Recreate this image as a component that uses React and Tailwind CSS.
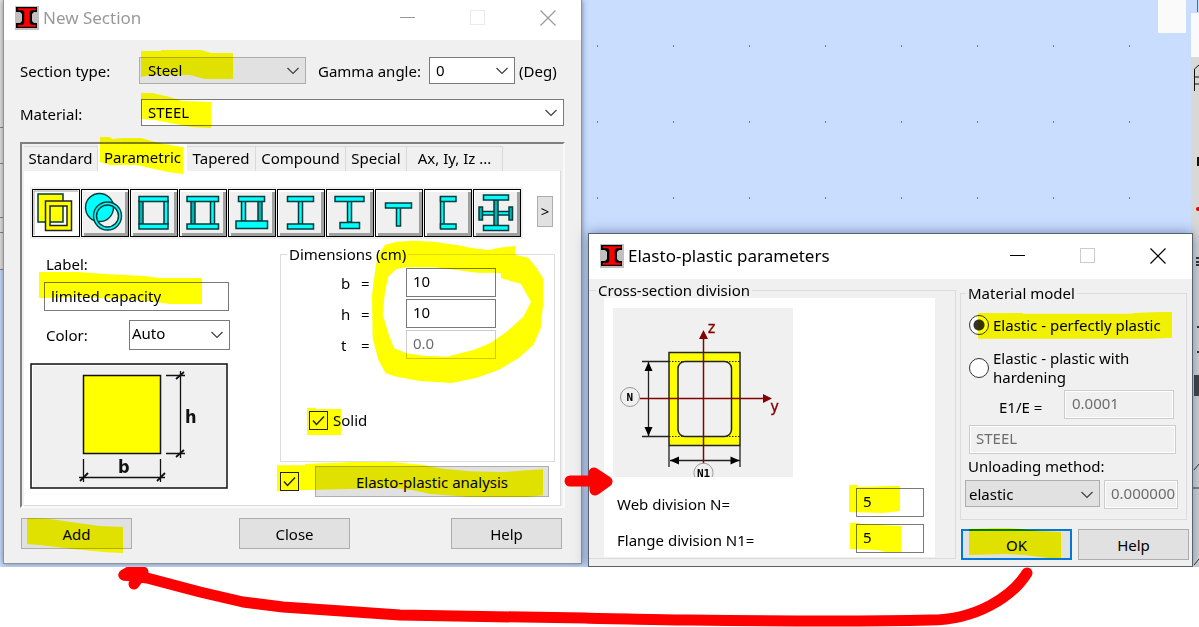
import React from 'react';

function Mark({ className, viewBox, points }) {
  return (
    <svg
      aria-hidden="true"
      viewBox={viewBox}
      preserveAspectRatio="none"
      className={`pointer-events-none absolute max-w-none mix-blend-multiply ${className}`}
    >
      <path fill="#ffff00" fillRule="evenodd" d={points} />
    </svg>
  );
}

function AppIcon() {
  return (
    <svg viewBox="0 0 24 24" className="size-6 shrink-0" aria-hidden="true">
      <rect width="24" height="24" fill="#c0c0c0" />
      <path d="M1 1H22V6H19L17 8V15L19 17H22V22H1V17H5L7 15V8L5 6H1Z" fill="#000" />
      <path d="M3 2.500H20.500V4H16L14.500 6V17L16 19H20.500V20.500H3V19H8L9.500 17V6L8 4H3Z" fill="#ff0000" stroke="#ff0000" strokeWidth="0.500" />
    </svg>
  );
}

function TitleBar({ title, active, className }) {
  const line = active ? '#000000' : '#999999';
  return (
    <header className={`flex items-center bg-white ${className}`}>
      <AppIcon />
      <h1 className={`ml-1 flex-1 text-[17px] leading-6 ${active ? 'text-black' : 'text-[#999999]'}`}>{title}</h1>
      <div className="flex items-center gap-[54px]">
        <button type="button" aria-label="Minimize" className="size-4">
          <svg viewBox="0 0 16 16" className="size-4"><path d="M0 7.500h15" stroke={line} /></svg>
        </button>
        <button type="button" aria-label="Maximize" disabled className="size-4">
          <svg viewBox="0 0 16 16" className="size-4">
            <rect x="0.500" y="0.500" width="14" height="14" fill="none" stroke={active ? '#cccccc' : '#ebebeb'} />
          </svg>
        </button>
        <button type="button" aria-label="Close window" className="size-4">
          <svg viewBox="0 0 16 16" className="size-4"><path d="M0.500 0.500l15 15M15.500 0.500l-15 15" stroke={line} strokeWidth="1.200" /></svg>
        </button>
      </div>
    </header>
  );
}

function Select({ id, label, value, className, selectClass, children }) {
  return (
    <div className={`relative ${className}`}>
      <select
        id={id}
        aria-label={label}
        defaultValue={value}
        className={`block w-full appearance-none border leading-5 text-black outline-none ${selectClass}`}
      >
        <option>{value}</option>
      </select>
      <svg viewBox="0 0 12 8" className="pointer-events-none absolute top-1/2 right-[7px] h-2 w-3 -translate-y-1/2" aria-hidden="true">
        <path d="M0.500 1l5.500 5.500L11.500 1" fill="none" stroke="#404040" strokeWidth="1.200" />
      </svg>
      {children}
    </div>
  );
}

function Button({ children, className = '' }) {
  return (
    <button type="button" className={`h-[31px] border border-[#adadad] bg-[#e1e1e1] leading-5 text-black ${className}`}>
      {children}
    </button>
  );
}

function Check({ id, label }) {
  return (
    <span className="relative block size-[19px] shrink-0">
      <input id={id} aria-label={label} type="checkbox" defaultChecked className="block size-[19px] appearance-none border border-[#222222] bg-white" />
      <svg viewBox="0 0 19 19" className="pointer-events-none absolute inset-0 size-[19px]" aria-hidden="true">
        <path d="M4 9.500l3.500 4L15 5.500" fill="none" stroke="#222" strokeWidth="1.400" />
      </svg>
    </span>
  );
}

const CYAN = '#00ffff';
const TEAL = '#00b4b4';

const sectionShapes = [
  {
    name: 'Rectangle',
    boxes: [[6, 5, 25, 28, '#ffff00']],
    extra: (
      <path d="M13.500 12h26v29.500h-26zM18 17v19.500h17V17z" fill="#ffff00" stroke="#222" strokeWidth="1.500" fillRule="evenodd" />
    ),
  },
  {
    name: 'Circle',
    boxes: [],
    extra: (
      <g stroke="#053b3b" strokeWidth="1.400">
        <circle cx="18.500" cy="18.500" r="14" fill={CYAN} />
        <circle cx="26.500" cy="27" r="12.500" fill="none" stroke={CYAN} strokeWidth="3" />
        <circle cx="26.500" cy="27" r="14" fill="none" />
        <circle cx="26.500" cy="27" r="11" fill="none" />
      </g>
    ),
  },
  { name: 'Box', boxes: [[9, 12, 4, 23, TEAL], [34, 12, 4, 23, CYAN], [9, 7.5, 29, 5, CYAN], [9, 35, 29, 5, CYAN]] },
  { name: 'Wide box', boxes: [[12, 12, 4, 23, TEAL], [31.5, 12, 4, 23, CYAN], [8, 7.5, 31.5, 5, CYAN], [8, 35, 31.5, 5, CYAN]] },
  { name: 'Asymmetric box', boxes: [[13.5, 12, 4, 20, CYAN], [30, 12, 4, 20, TEAL], [10.5, 7.5, 26, 5, CYAN], [8, 32, 31.5, 7.5, CYAN]] },
  { name: 'I section', boxes: [[21.5, 12, 4, 23, CYAN], [10.5, 7.5, 26, 5, CYAN], [10.5, 35, 26, 5, CYAN]] },
  { name: 'Asymmetric I section', boxes: [[21.5, 12, 4, 21, CYAN], [9, 7.5, 29, 5, CYAN], [14, 33.5, 19.5, 6, CYAN]] },
  { name: 'T section', boxes: [[21.5, 18, 4, 19, CYAN], [10.5, 14, 26, 5, CYAN]] },
  { name: 'Channel', boxes: [[16.5, 8, 3.5, 31, CYAN], [16.5, 7.5, 15.5, 5, CYAN], [16.5, 35, 15.5, 5, CYAN]] },
  {
    name: 'Cross section',
    boxes: [[9, 22.5, 28, 3.5, CYAN], [21, 11, 4, 26, TEAL], [10.5, 6, 25, 5, CYAN], [10.5, 36.5, 25, 5, CYAN], [6, 18, 3.5, 13, TEAL], [36, 18, 3.5, 13, TEAL]],
  },
];

function ShapeButton({ shape, selected }) {
  return (
    <button
      type="button"
      aria-label={shape.name}
      aria-pressed={selected}
      className={`h-12 w-12 shrink-0 border border-black ${selected ? 'bg-white' : 'bg-[#f0f0f0]'}`}
    >
      <svg viewBox="1 1 46 46" className="block h-[46px] w-[46px]" aria-hidden="true">
        {selected ? (
          <path d="M2 46V2H46" fill="none" stroke="#a0a0a0" />
        ) : (
          <>
            <path d="M1 46V2H46" fill="none" stroke="#fff" strokeWidth="2" />
            <path d="M3 45.500H45.500V3" fill="none" stroke="#a0a0a0" strokeWidth="3" />
          </>
        )}
        {shape.boxes.map(([x, y, w, h, fill]) => (
          <rect key={`${x}-${y}-${w}`} x={x} y={y} width={w} height={h} fill={fill} stroke="#053b3b" strokeWidth="1.500" />
        ))}
        {shape.extra}
      </svg>
    </button>
  );
}

const tabs = [
  { name: 'Standard', width: 'w-[74px]' },
  { name: 'Parametric', width: 'w-[89px]' },
  { name: 'Tapered', width: 'w-[69px]' },
  { name: 'Compound', width: 'w-[90px]' },
  { name: 'Special', width: 'w-[61px]' },
  { name: 'Ax, Iy, Iz ...', width: 'w-[96px]' },
];

function Tabs() {
  return (
    <div role="tablist" className="flex h-[27px] items-end pl-[2px]">
      {tabs.map((tab) => {
        const on = tab.name === 'Parametric';
        return (
          <button
            key={tab.name}
            role="tab"
            type="button"
            aria-selected={on}
            className={`relative shrink-0 leading-5 whitespace-nowrap ${tab.width} ${
              on ? 'h-[27px] bg-white pb-[2px]' : 'h-[25px] border-t border-r border-[#d9d9d9] pb-[2px]'
            }`}
          >
            {tab.name}
            {on && (
              <Mark
                className="-top-[7px] left-[2px] z-10 h-[37px] w-[83px]"
                viewBox="100 137 83 37"
                points="M100 137H110L112 139L123 138H141L155 142L170 145L183 147V174L168 172L150 168L137 165H110L100 162Z"
              />
            )}
          </button>
        );
      })}
    </div>
  );
}

function RectanglePreview() {
  return (
    <svg viewBox="0 0 198 126" className="block h-[126px] w-[198px]" role="img" aria-label="Rectangle with width b and height h">
      <rect x="1" y="1" width="196" height="124" fill="#f0f0f0" stroke="#111" strokeWidth="1.500" />
      <path d="M2.500 124V2.500H196" fill="none" stroke="#fff" />
      <rect x="53.500" y="12.500" width="77" height="78" fill="#ffff00" stroke="#111" strokeWidth="1.500" />
      <g stroke="#111" strokeWidth="1.300" fill="none">
        <path d="M136 12.500h19M136 90.500h19M150.500 8v87M53.500 96v23M130.500 96v23M49 114.500h86" />
        <path d="M146 16l8-7M146 94l8-7M50 118l8-8M127 118l8-8" strokeWidth="1.800" />
      </g>
      <g fontFamily="'DejaVu Sans Condensed', 'Noto Sans', sans-serif" fontWeight="700" fontSize="18" fill="#111">
        <text x="155" y="60">h</text>
        <text x="88" y="110">b</text>
      </g>
    </svg>
  );
}

function DimensionRow({ id, name, value, disabled }) {
  return (
    <div className="flex h-[29px] items-center">
      <label htmlFor={id} className="flex w-[125px] shrink-0 pl-[60px] leading-5">
        <span className="w-5">{name}</span>
        <span>=</span>
      </label>
      <input
        id={id}
        defaultValue={value}
        disabled={disabled}
        className={`h-[29px] w-[90px] border pb-1 pl-[6px] leading-5 ${
          disabled ? 'border-[#cccccc] text-[#6d6d6d]' : 'border-[#7a7a7a] text-black'
        }`}
      />
    </div>
  );
}

function NewSectionDialog() {
  return (
    <section aria-label="New Section" className="relative min-w-0 border-x border-b border-[#8d949e] bg-[#f0f0f0] shadow-[0_0_6px_rgba(0,0,0,0.45)]">
      <TitleBar title="New Section" active={false} className="h-10 pr-[25px] pb-1 pl-[11px]" />
      <div className="px-4 pt-[17px] pb-[14px]">
        <div className="flex items-center">
          <label htmlFor="section-type" className="w-[119px] shrink-0 leading-5">Section type:</label>
          <Select id="section-type" value="Steel" className="w-[167px]" selectClass="h-[27px] border-[#adadad] bg-[#e1e1e1] pb-[2px] pl-2">
            <Mark
              className="-top-[7px] left-[2px] h-[29px] w-[92px]"
              viewBox="141 50 92 29"
              points="M141 51L161 51V50H201L211 53H233V79H205L190 75H150L141 77Z"
            />
          </Select>
          <label htmlFor="gamma" className="w-[123px] shrink-0 pl-3 leading-5 whitespace-nowrap">Gamma angle:</label>
          <Select id="gamma" value="0" className="w-[86px]" selectClass="h-[27px] border-[#7a7a7a] bg-white pb-[2px] pl-[6px]" />
          <span className="pl-1 leading-5">(Deg)</span>
        </div>
        <div className="mt-[15px] flex items-center pr-px">
          <label htmlFor="material" className="w-[121px] shrink-0 pt-[2px] leading-5">Material:</label>
          <Select id="material" value="STEEL" className="flex-1" selectClass="h-[27px] border-[#7a7a7a] bg-white pb-[2px] pl-[6px]">
            <Mark
              className="-top-[6px] left-0 h-[35px] w-[70px]"
              viewBox="141 93 70 35"
              points="M141 93H152L170 97L182 101L211 102V128L192 127L175 124L155 120L141 119Z"
            />
          </Select>
        </div>

        <div className="mt-4 border-2 border-t-[#808080] border-r-[#fafafa] border-b-[#fafafa] border-l-[#808080]">
          <Tabs />
          <div role="tabpanel" className="mx-[2px] border-r border-b border-[#d9d9d9] bg-white pt-4 pb-2 pl-1.5">
            <div className="flex items-center gap-[14px]">
              <div className="flex gap-px border border-[#f0f0f0] bg-[#f0f0f0] p-px">
                {sectionShapes.map((shape, i) => (
                  <ShapeButton key={shape.name} shape={shape} selected={i === 0} />
                ))}
              </div>
              <button type="button" aria-label="More shapes" className="-mt-1 h-[31px] w-4 border border-[#adadad] bg-[#e1e1e1] leading-5">&gt;</button>
            </div>

            <div className="flex justify-between pr-[5px]">
              <div className="w-[200px] shrink-0 pt-[15px]">
                <label htmlFor="label" className="block pl-4 leading-5">Label:</label>
                <div className="relative mt-2 ml-[14px]">
                  <input id="label" defaultValue="limited capacity" className="block h-[29px] w-[185px] border border-[#7a7a7a] bg-white pb-[2px] pl-[6px] leading-5" />
                  <Mark
                    className="-top-[10px] -left-[5px] h-8 w-[163px]"
                    viewBox="39 272 163 32"
                    points="M39 272H78L105 274L144 276L160 278H202V304H170L150 301L120 299L80 297L39 298Z"
                  />
                </div>
                <div className="mt-[9px] flex items-center justify-between pl-4">
                  <label htmlFor="color" className="leading-5">Color:</label>
                  <Select id="color" value="Auto" className="w-[101px]" selectClass="h-[30px] border-[#7a7a7a] bg-white pb-1 pl-[2px]" />
                </div>
                <div className="mt-[13px]"><RectanglePreview /></div>
              </div>

              <div className="w-[275px] shrink-0 pt-[5px]">
                <fieldset className="border border-[#dcdcdc] pb-[31px]">
                  <legend className="ml-[6px] px-[2px] leading-5">Dimensions (cm)</legend>
                  <div className="relative flex flex-col gap-[2px] pt-1">
                    <DimensionRow id="b" name="b" value="10" />
                    <DimensionRow id="h" name="h" value="10" />
                    <DimensionRow id="t" name="t" value="0.0" disabled />
                    <Mark
                      className="-top-6 left-[89px] h-36 w-[175px]"
                      viewBox="300 15 525 432"
                      points="M345 30L380 20L430 17L490 20L560 30L610 40L655 45L690 38L736 33V60L775 68L800 100L819 130V210L812 280L790 330L745 370L685 405L620 428L545 444L450 438L380 425L347 415L325 375L308 310L306 180L315 110L322 65ZM345 170L355 125L378 103L408 97H490L560 105L620 113L692 114L694 130L752 146L783 200L760 245L710 290L660 325L610 345L530 365L460 362L410 355L372 340L355 295L338 237Z"
                    />
                  </div>
                  <div className="relative mt-[51px] flex h-5 items-center gap-[5px] pl-7">
                    <Check id="solid" label="Solid" />
                    <label htmlFor="solid" className="leading-5">Solid</label>
                    <Mark
                      className="-top-[2px] left-[26px] h-[27px] w-[34px]"
                      viewBox="307 408 34 27"
                      points="M307 408H316V409H341V435H307Z"
                    />
                  </div>
                </fieldset>
                <div className="relative mt-1 flex items-center gap-4 pr-[6px]">
                  <Check id="elasto" label="Use elasto-plastic analysis" />
                  <Button className="flex-1">Elasto-plastic analysis</Button>
                  <Mark
                    className="-top-1 -left-[3px] h-[35px] w-[266px]"
                    viewBox="21 215 798 105"
                    points="M21 225H105V221L250 215L370 216L455 223L520 235L600 243L700 245L795 238L819 237V315L770 320H600L480 311L430 300L370 293L240 296L80 300L50 303H21Z"
                  />
                  <svg viewBox="0 0 50 32" className="pointer-events-none absolute top-0 left-[284px] z-20 h-8 w-[50px]" aria-hidden="true">
                    <path d="M6 15H36" stroke="#ff0000" strokeWidth="11" strokeLinecap="round" />
                    <path d="M30 7L43 15.500L31 24Z" fill="#ff0000" stroke="#ff0000" strokeWidth="11" strokeLinejoin="round" />
                  </svg>
                </div>
              </div>
            </div>
          </div>
        </div>

        <div className="mt-[10px] flex justify-between pr-[3px] pl-px">
          <div className="relative">
            <Button className="block w-[111px]">Add</Button>
            <Mark
              className="top-0 left-[6px] h-[35px] w-24"
              viewBox="81 489 289 105"
              points="M81 489L145 491L240 505L300 513L370 516V594L320 592L225 583L125 571L81 567Z"
            />
          </div>
          <Button className="ml-[6px] w-[111px]">Close</Button>
          <Button className="w-[111px]">Help</Button>
        </div>
      </div>
    </section>
  );
}

function DivisionDiagram() {
  return (
    <svg viewBox="0 0 180 169" className="block h-[169px] w-[180px] overflow-visible" role="img" aria-label="Box section with y and z axes">
      <rect width="180" height="169" fill="#f0f0f0" />
      <rect x="56" y="44.500" width="71" height="93" fill="#ffff00" stroke="#222" strokeWidth="1.500" />
      <rect x="65" y="53.500" width="53.500" height="75" rx="7" fill="#f0f0f0" stroke="#222" strokeWidth="1.500" />
      <path d="M56 53.500h71M56 128.500h71" stroke="#222" strokeDasharray="1.500 1.500" />
      <g stroke="#222" strokeWidth="1.300">
        <path d="M29 53.500h27M29 128.500h27M35.500 54v74M56 138v21M127 138v21M57 152.500h70" />
      </g>
      <path d="M35.500 54l4 9h-8zM35.500 128l4-9h-8zM57 152.500l9-4v8zM126.500 152.500l-9-4v8z" fill="#000" />
      <g stroke="#850000" strokeWidth="1.500"><path d="M90.500 28v128M27 90.500h126" /></g>
      <path d="M90.500 22l4.500 9h-9zM159 90.500l-9-4.500v9z" fill="#850000" />
      <circle cx="17" cy="89" r="9.500" fill="#f0f0f0" stroke="#999" />
      <path d="M82 169A9.500 9.500 0 1 1 99 169" fill="#f0f0f0" stroke="#999" />
      <g fontFamily="'DejaVu Sans Mono', monospace" fontWeight="700" fontSize="11" fill="#000">
        <text x="13.500" y="93">N</text>
        <text x="84" y="169">N1</text>
      </g>
      <g fontFamily="'DejaVu Sans Mono', monospace" fontSize="15" fill="#850000" stroke="#850000" strokeWidth="0.300">
        <text x="94" y="25">z</text>
        <text x="157" y="104">y</text>
      </g>
    </svg>
  );
}

function DivisionRow({ id, label, children }) {
  return (
    <div className="relative flex items-center justify-between pr-[11px] pl-[13px]">
      <label htmlFor={id} className="pt-[3px] leading-5">{label}</label>
      <div className="relative">
        <input id={id} defaultValue="5" className="block h-[29px] w-[68px] border border-[#7a7a7a] bg-white pb-[3px] pl-[6px] leading-5" />
        {children}
      </div>
    </div>
  );
}

function Radio({ id, checked }) {
  return (
    <input
      id={id}
      type="radio"
      name="model"
      defaultChecked={checked}
      className="size-5 shrink-0 appearance-none rounded-full border border-[#333333] bg-white checked:bg-[radial-gradient(circle,#333333_5px,#ffffff_6px)]"
    />
  );
}

const disabledInput = 'block border border-[#cccccc] bg-[#f0f0f0] leading-5 text-[#6d6d6d] shadow-[inset_0_0_0_1px_#ffffff]';

function ParametersDialog() {
  return (
    <section aria-label="Elasto-plastic parameters" className="relative min-w-0 border border-[#596069] bg-[#f0f0f0] shadow-[0_0_12px_rgba(20,40,90,0.5)]">
      <TitleBar title="Elasto-plastic parameters" active className="h-[45px] pr-[26px] pb-px pl-[11px]" />
      <div className="flex gap-1 pr-[3px]">
        <fieldset className="mt-[3px] mb-[7px] min-w-0 flex-1 border border-l-0 border-[#dcdcdc]">
          <legend className="ml-[7px] px-[2px] leading-4">Cross-section division</legend>
          <div className="mr-5 ml-[15px] bg-white pb-1">
            <div className="pt-[10px] pb-[11px] pl-[9px]"><DivisionDiagram /></div>
            <div className="flex flex-col gap-[7px]">
              <DivisionRow id="web" label="Web division N=">
                <Mark className="-top-[3px] -left-[7px] h-7 w-[51px]" viewBox="849 485 51 28" points="M849 485H858V487L889 486H900V511L882 513L849 512Z" />
              </DivisionRow>
              <DivisionRow id="flange" label="Flange division N1=">
                <Mark className="-top-[1px] -left-[6px] h-[29px] w-[51px]" viewBox="850 523 51 29" points="M850 523H860V524L881 525L901 526V552H885L878 550L850 549Z" />
              </DivisionRow>
            </div>
          </div>
        </fieldset>

        <div className="w-[229px] shrink-0 pt-1.5 pb-1.5">
          <fieldset className="mr-[2px] border border-[#dcdcdc] pb-[10px]">
            <legend className="ml-[5px] px-[2px] leading-4">Material model</legend>
            <div className="relative mt-[14px] flex items-center gap-1 pl-2">
              <Radio id="perfect" checked />
              <label htmlFor="perfect" className="leading-5 whitespace-nowrap">Elastic - perfectly plastic</label>
              <Mark
                className="-top-[3px] left-[17px] h-[27px] w-[194px]"
                viewBox="234 246 582 81"
                points="M234 249H366L370 251H695L700 249L780 246H816V323L753 326H234Z"
              />
            </div>
            <div className="mt-[14px] flex items-center gap-1 pl-2">
              <Radio id="hardening" />
              <label htmlFor="hardening" className="leading-[19px]">Elastic - plastic with<br />hardening</label>
            </div>
            <div className="mt-[3px] flex items-center pr-3">
              <label htmlFor="ratio" className="w-[103px] pt-[5px] pl-[38px] leading-5 whitespace-nowrap">E1/E =</label>
              <input id="ratio" disabled defaultValue="0.0001" className={`h-[29px] w-[110px] pb-[3px] pl-[7px] ${disabledInput}`} />
            </div>
            <input aria-label="Material" disabled defaultValue="STEEL" className={`mt-1.5 ml-2 h-[29px] w-[207px] pb-[3px] pl-[6px] ${disabledInput}`} />
            <label htmlFor="unloading" className="mt-[2px] block pl-[7px] leading-5">Unloading method:</label>
            <div className="mt-1 flex gap-1 pl-1">
              <Select id="unloading" value="elastic" className="w-[135px]" selectClass="h-[27px] border-[#adadad] bg-[#e1e1e1] pl-[3px]" />
              <input aria-label="Unloading value" disabled defaultValue="0.000000" className={`h-[29px] w-[74px] pr-px pb-[3px] pl-[6px] ${disabledInput}`} />
            </div>
          </fieldset>
          <div className="mt-[9px] flex gap-1.5 pl-px">
            <div className="relative">
              <button type="button" className="block h-[31px] w-[111px] border-2 border-[#0078d7] bg-[#e1e1e1] leading-5">OK</button>
              <Mark className="-top-[1px] left-2 h-[30px] w-[92px]" viewBox="969 528 92 30" points="M969 529L995 528H1010L1040 531L1061 532V558H1048L1025 555L1005 554L969 555Z" />
            </div>
            <Button className="w-[111px]">Help</Button>
          </div>
        </div>
      </div>
    </section>
  );
}

function Backdrop() {
  return (
    <div aria-hidden="true" className="absolute inset-0 flex justify-between overflow-hidden">
      <svg className="absolute inset-0 h-full w-full">
        <defs>
          <pattern id="dots" x="597" y="45" width="76" height="76" patternUnits="userSpaceOnUse">
            <rect width="1" height="2" fill="#6478e6" />
          </pattern>
        </defs>
        <rect width="100%" height="100%" fill="url(#dots)" />
      </svg>
      <svg className="h-[270px] w-1" viewBox="0 0 4 270">
        <rect width="4" height="270" fill="#e6e6e6" />
        <path d="M0 127.500h4M0 163.500h4M0 217.500h4M0 232.500h4M0 269.500h4" stroke="#888" />
      </svg>
      <div className="relative flex h-full">
        <div className="mr-[5px] h-[33px] w-7 bg-[#fafafa]" />
        <svg className="h-full w-2" viewBox="0 0 8 567" preserveAspectRatio="xMinYMin slice">
          <path d="M6.500 0V12" stroke="#667" />
          <rect y="13" width="8" height="554" fill="#d8d8d8" />
          <rect y="13" width="8" height="44" fill="#fafafa" />
          <path d="M3.500 91V69L8 65M4 77h4M4 84h4" fill="none" stroke="#111" />
          <path d="M6 157h2v9H6z" fill="#111" />
          <circle cx="7" cy="209" r="2" fill="#d00" />
          <path d="M5 258h3M5 262h3M5 265h3M6 327h2M6 352h2" stroke="#333" strokeWidth="2" />
          <rect x="3" y="375" width="5" height="21" fill="#444" />
          <path d="M3 470l5-6M0 488h8M3 565l5-6" stroke="#333" />
        </svg>
      </div>
    </div>
  );
}

export default function App() {
  return (
    <main className="min-h-screen overflow-hidden bg-white font-['Noto_Sans',sans-serif] text-[15px] text-black">
      <div className="relative overflow-hidden bg-[#c9deff] pr-[6px] pl-[3px]">
        <Backdrop />
        <div className="grid grid-cols-[579fr_605fr] items-end gap-[6px]">
          <div className="pb-[3px]"><NewSectionDialog /></div>
          <ParametersDialog />
        </div>
      </div>
      <svg viewBox="0 567 1199 60" preserveAspectRatio="none" className="block h-[60px] w-full" aria-hidden="true">
        <g fill="none" stroke="#ff0000" strokeWidth="11" strokeLinecap="round" strokeLinejoin="round">
          <path d="M1027 573C1012 597 976 620 930 620C850 622 770 621 687 620C640 619 610 619 585 618C520 617 430 616 400 615L283 607L243 602L200 592L147 578L124 575" />
          <path d="M124 575L129 572H143L134 584" />
        </g>
      </svg>
    </main>
  );
}
